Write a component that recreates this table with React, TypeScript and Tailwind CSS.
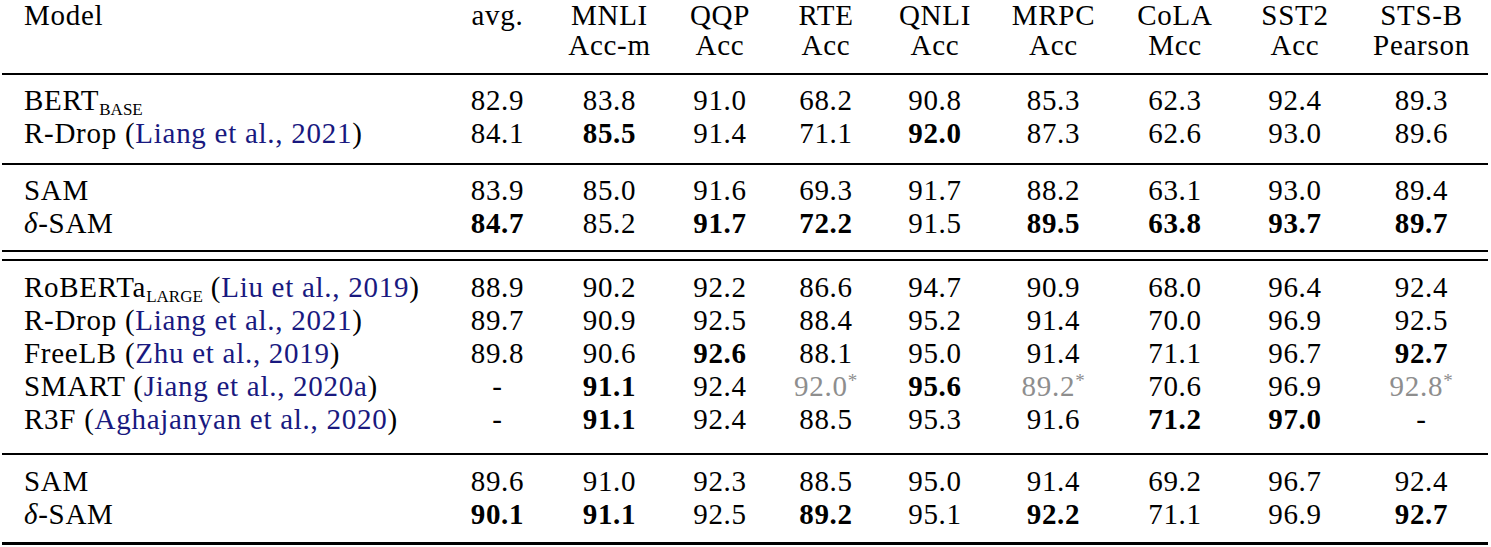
import React from 'react';

// glue results table (dev set), paper style
const cols =
  'grid grid-cols-[440px_111px_113px_108px_104px_114px_123px_120px_120px_133px]';

const heads: [string, string][] = [
  ['avg.', ''],
  ['MNLI', 'Acc-m'],
  ['QQP', 'Acc'],
  ['RTE', 'Acc'],
  ['QNLI', 'Acc'],
  ['MRPC', 'Acc'],
  ['CoLA', 'Mcc'],
  ['SST2', 'Acc'],
  ['STS-B', 'Pearson'],
];

const Cite = ({ children }: { children: React.ReactNode }) => (
  <>
    (<span className="text-[#19197f]">{children}</span>)
  </>
);

const Sub = ({ children }: { children: React.ReactNode }) => (
  <span className="relative top-[5px] text-[17px] leading-none tracking-normal">{children}</span>
);

const Delta = () => <span className="italic">δ</span>;

type Row = { model: React.ReactNode; vals: string[] };

// "b:" bold best result, "g:" grey starred (not comparable)
const groups: Row[][] = [
  [
    {
      model: (
        <>
          BERT<Sub>BASE</Sub>
        </>
      ),
      vals: ['82.9', '83.8', '91.0', '68.2', '90.8', '85.3', '62.3', '92.4', '89.3'],
    },
    {
      model: (
        <>
          R-Drop <Cite>Liang et al., 2021</Cite>
        </>
      ),
      vals: ['84.1', 'b:85.5', '91.4', '71.1', 'b:92.0', '87.3', '62.6', '93.0', '89.6'],
    },
  ],
  [
    { model: 'SAM', vals: ['83.9', '85.0', '91.6', '69.3', '91.7', '88.2', '63.1', '93.0', '89.4'] },
    {
      model: (
        <>
          <Delta />-SAM
        </>
      ),
      vals: ['b:84.7', '85.2', 'b:91.7', 'b:72.2', '91.5', 'b:89.5', 'b:63.8', 'b:93.7', 'b:89.7'],
    },
  ],
  [
    {
      model: (
        <>
          RoBERTa<Sub>LARGE</Sub> <Cite>Liu et al., 2019</Cite>
        </>
      ),
      vals: ['88.9', '90.2', '92.2', '86.6', '94.7', '90.9', '68.0', '96.4', '92.4'],
    },
    {
      model: (
        <>
          R-Drop <Cite>Liang et al., 2021</Cite>
        </>
      ),
      vals: ['89.7', '90.9', '92.5', '88.4', '95.2', '91.4', '70.0', '96.9', '92.5'],
    },
    {
      model: (
        <>
          FreeLB <Cite>Zhu et al., 2019</Cite>
        </>
      ),
      vals: ['89.8', '90.6', 'b:92.6', '88.1', '95.0', '91.4', '71.1', '96.7', 'b:92.7'],
    },
    {
      model: (
        <>
          SMART <Cite>Jiang et al., 2020a</Cite>
        </>
      ),
      vals: ['-', 'b:91.1', '92.4', 'g:92.0', 'b:95.6', 'g:89.2', '70.6', '96.9', 'g:92.8'],
    },
    {
      model: (
        <>
          R3F <Cite>Aghajanyan et al., 2020</Cite>
        </>
      ),
      vals: ['-', 'b:91.1', '92.4', '88.5', '95.3', '91.6', 'b:71.2', 'b:97.0', '-'],
    },
  ],
  [
    { model: 'SAM', vals: ['89.6', '91.0', '92.3', '88.5', '95.0', '91.4', '69.2', '96.7', '92.4'] },
    {
      model: (
        <>
          <Delta />-SAM
        </>
      ),
      vals: ['b:90.1', 'b:91.1', '92.5', 'b:89.2', '95.1', 'b:92.2', '71.1', '96.9', 'b:92.7'],
    },
  ],
];

const Value = ({ v }: { v: string }) => {
  if (v.startsWith('b:')) return <span className="font-bold">{v.slice(2)}</span>;
  if (v.startsWith('g:'))
    return (
      <span className="text-[#8e8e8e]">
        {v.slice(2)}
        <span className="relative -top-[9px] text-[19px] leading-none">*</span>
      </span>
    );
  return <>{v}</>;
};

const Rule = ({ h = 'h-[2px]' }: { h?: string }) => <div className={`${h} bg-black`} />;

const groupPad = ['pt-[9px] pb-[13px]', 'pt-[9px] pb-[10px]', 'pt-[10px] pb-[17px]', 'pt-[10px] pb-[11px]'];

export default function App() {
  return (
    <div className="w-[1491px] h-[547px] bg-white text-black font-[family-name:Liberation_Serif,Times_New_Roman,serif] text-[29px] tracking-[0.025em]">
      <div className="ml-[2px] w-[1486px]">
        {/* header */}
        <div className={`${cols} pb-[13px] leading-[30px]`}>
          <div className="pl-[22px]">Model</div>
          {heads.map(([a, b]) => (
            <div key={a} className="flex flex-col items-center">
              <span>{a}</span>
              <span>{b || '\u00a0'}</span>
            </div>
          ))}
        </div>
        <Rule />

        {groups.map((rows, gi) => (
          <React.Fragment key={gi}>
            <div className={`${groupPad[gi]} leading-[33px]`}>
              {rows.map((r, ri) => (
                <div key={ri} className={cols}>
                  <div className="pl-[22px] whitespace-nowrap">{r.model}</div>
                  {r.vals.map((v, vi) => (
                    <div key={vi} className="text-center">
                      <Value v={v} />
                    </div>
                  ))}
                </div>
              ))}
            </div>
            {gi === 1 ? (
              <div className="flex flex-col gap-[7px]">
                <Rule />
                <Rule />
              </div>
            ) : gi === 3 ? (
              <Rule h="h-[3px]" />
            ) : (
              <Rule />
            )}
          </React.Fragment>
        ))}
      </div>
    </div>
  );
}
